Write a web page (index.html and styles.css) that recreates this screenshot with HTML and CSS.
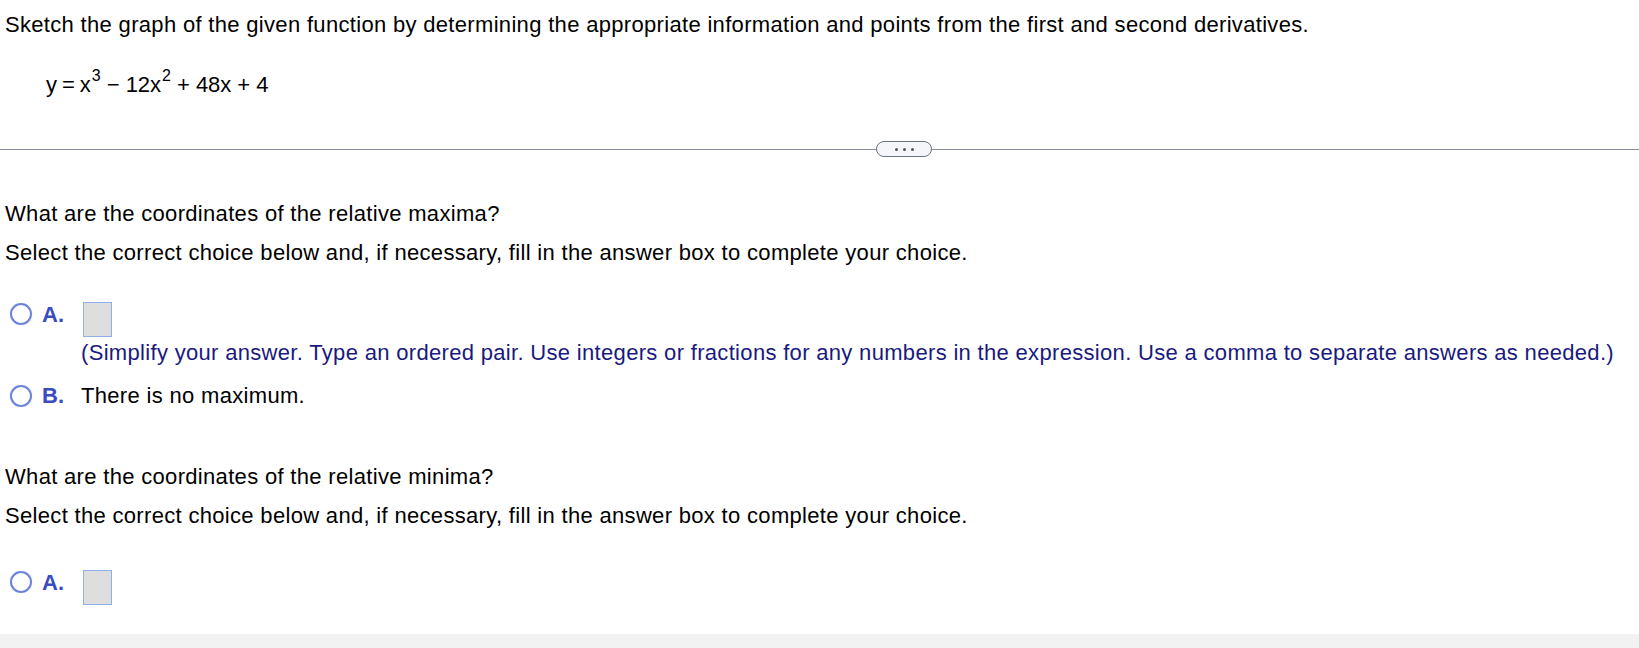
FILE: index.html
```html
<!DOCTYPE html>
<html lang="en">
<head>
<meta charset="utf-8">
<title>Relative extrema</title>
<link rel="stylesheet" href="styles.css">
</head>
<body>
<div class="page">
  <main class="content">
    <p class="line intro">Sketch the graph of the given function by determining the appropriate information and points from the first and second derivatives.</p>
    <p class="line formula">y<span class="op eq">=</span>x<sup>3</sup><span class="op">−</span>12x<sup>2</sup><span class="op">+</span>48x<span class="op">+</span>4</p>

    <div class="divider">
      <span class="rule"></span>
      <span class="pill"><i></i><i></i><i></i></span>
    </div>

    <section class="question q1">
      <p class="line">What are the coordinates of the relative maxima?</p>
      <p class="line select">Select the correct choice below and, if necessary, fill in the answer box to complete your choice.</p>

      <div class="choice choice-a">
        <span class="radio"></span>
        <span class="letter">A.</span>
        <div class="answer">
          <span class="box"></span>
          <p class="line hint">(Simplify your answer. Type an ordered pair. Use integers or fractions for any numbers in the expression. Use a comma to separate answers as needed.)</p>
        </div>
      </div>

      <div class="choice choice-b">
        <span class="radio"></span>
        <span class="letter">B.</span>
        <span class="line choice-text">There is no maximum.</span>
      </div>
    </section>

    <section class="question q2">
      <p class="line">What are the coordinates of the relative minima?</p>
      <p class="line select">Select the correct choice below and, if necessary, fill in the answer box to complete your choice.</p>

      <div class="choice choice-a2">
        <span class="radio"></span>
        <span class="letter">A.</span>
        <div class="answer">
          <span class="box"></span>
        </div>
      </div>
    </section>
  </main>
  <footer class="footer"></footer>
</div>
</body>
</html>
```

FILE: styles.css
```css
* { box-sizing: border-box; }

html, body {
  margin: 0;
  padding: 0;
  background: #ffffff;
}

body {
  font-family: "Liberation Sans", Arial, sans-serif;
  font-size: 22px;
  letter-spacing: 0.32px;
  color: #000000;
}

.page {
  display: flex;
  flex-direction: column;
  min-height: 648px;
}

.content {
  flex: 1;
}

.line {
  margin: 0;
  line-height: 24px;
}

.intro {
  padding-left: 5px;
  margin-top: 13px;
}

.formula {
  margin-top: 36px;
  padding-left: 46px;
  letter-spacing: 0;
}

.formula sup {
  font-size: 16px;
  line-height: 0;
  vertical-align: 11px;
  margin-left: 1px;
}

.formula .op {
  padding: 0 6px;
}

.formula .eq {
  padding: 0 5px;
}

.divider {
  margin-top: 44px;
  height: 16px;
  position: relative;
  display: flex;
  align-items: center;
}

.rule {
  flex: 1;
  height: 1px;
  background: #858d9c;
}

.pill {
  position: absolute;
  left: 876px;
  top: 0;
  width: 56px;
  height: 16px;
  border: 1px solid #6b7380;
  border-radius: 8px;
  background: #f4f6f9;
  display: flex;
  align-items: center;
  justify-content: center;
  gap: 5px;
}

.pill i {
  width: 3px;
  height: 3px;
  border-radius: 50%;
  background: #50565f;
}

.question {
  padding-left: 5px;
}

.q1 {
  margin-top: 45px;
}

.select {
  margin-top: 15px;
}

.choice {
  display: flex;
  align-items: flex-start;
  padding-left: 5px;
}

.radio {
  width: 22px;
  height: 22px;
  border: 2px solid #6a84d8;
  border-radius: 50%;
  flex: none;
  box-shadow: 0 0 1px rgba(106, 132, 216, 0.5);
}

.letter {
  font-weight: bold;
  color: #3a4cbf;
  line-height: 24px;
  margin-left: 10px;
  width: 41px;
  flex: none;
  letter-spacing: 0;
}

.choice-a {
  margin-top: 37px;
}

.choice-a .radio,
.choice-a2 .radio {
  margin-top: 1px;
}

.choice-a .letter,
.choice-a2 .letter {
  margin-top: 1px;
}

.answer {
  display: flex;
  flex-direction: column;
  align-items: flex-start;
}

.box {
  display: block;
  width: 29px;
  height: 35px;
  background: #dedede;
  border: 1px solid #8fb1ea;
}

.hint {
  margin-top: 4px;
  margin-left: -2px;
  color: #1a1a7e;
}

.choice-b {
  margin-top: 19px;
}

.choice-b .radio {
  margin-top: 1px;
}

.choice-text {
  margin-left: -2px;
}

.q2 {
  margin-top: 57px;
}

.choice-a2 {
  margin-top: 42px;
}

.footer {
  height: 14px;
  background: #f2f2f2;
}
```
